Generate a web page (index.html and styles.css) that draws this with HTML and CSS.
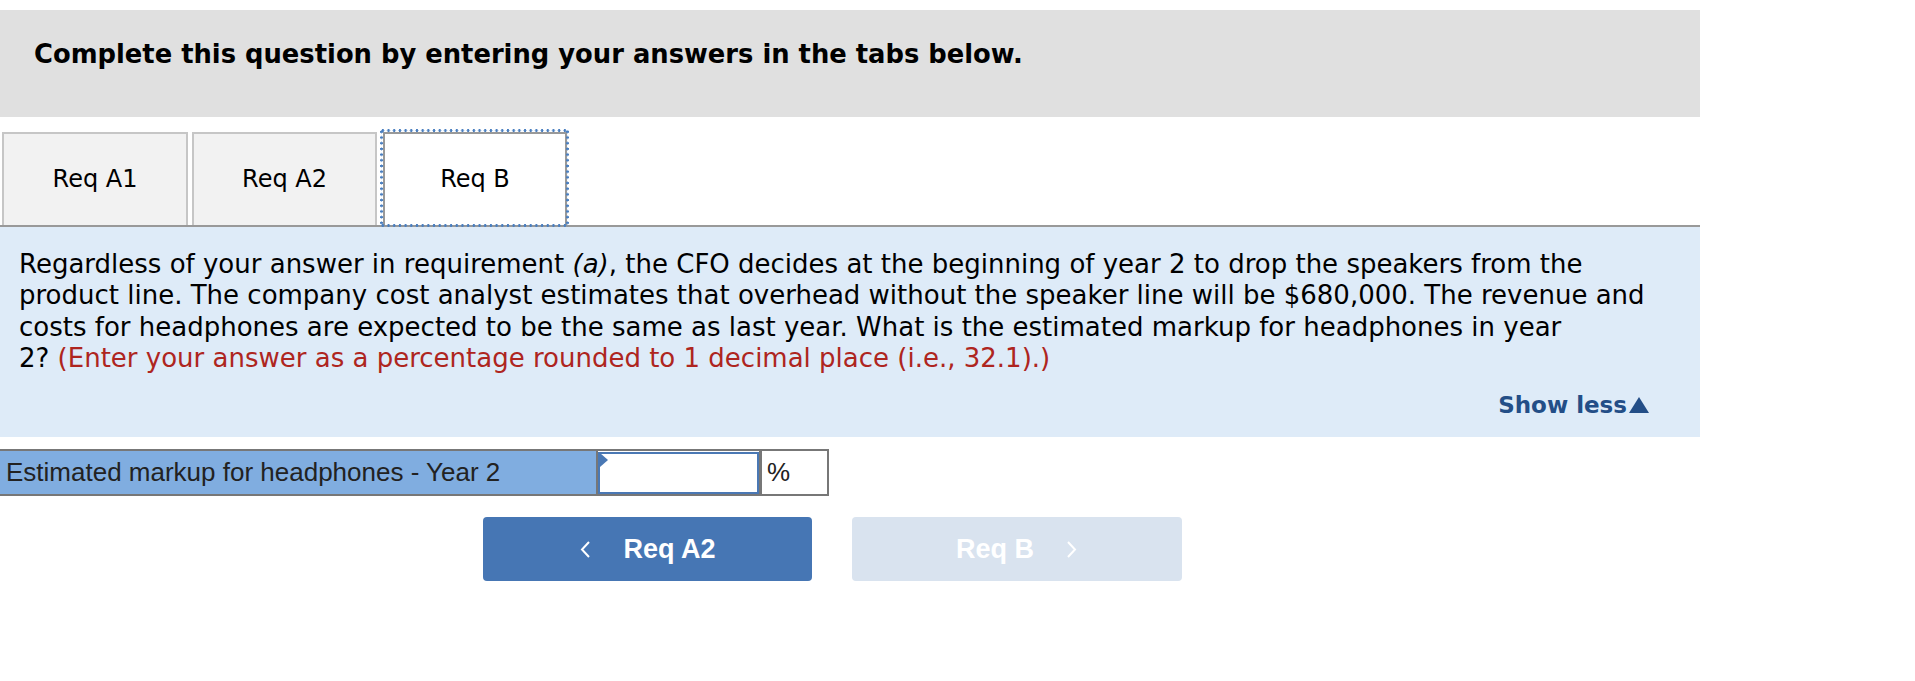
FILE: index.html
```html
<!DOCTYPE html>
<html lang="en">
<head>
	<meta charset="UTF-8">
	<title>Req B</title>
	<link rel="stylesheet" href="styles.css">
</head>
<body>
	<div class="page">
		<div class="intro">Complete this question by entering your answers in the tabs below.</div>
		<ul class="tabs">
			<li class="tab">Req A1</li>
			<li class="tab">Req A2</li>
			<li class="tab tab-on">Req B</li>
		</ul>
		<div class="panel">
			<p class="question">Regardless of your answer in requirement <i>(a)</i>, the CFO decides at the beginning of year 2 to drop the speakers from the product line. The company cost analyst estimates that overhead without the speaker line will be $680,000. The revenue and costs for headphones are expected to be the same as last year. What is the estimated markup for headphones in year 2?&nbsp;<span class="hint">(Enter your answer as a percentage rounded to 1 decimal place (i.e., 32.1).)</span></p>
			<div class="more"><a href="javascript:void(0)">Show less<span class="arrow"></span></a></div>
		</div>
		<div class="answer">
			<div class="answer-label">Estimated markup for headphones - Year 2</div>
			<div class="answer-input"><input type="text" value=""></div>
			<div class="answer-unit">%</div>
		</div>
		<div class="nav">
			<a class="btn" href="javascript:void(0)">
				<svg width="12" height="17" viewBox="0 0 12 17"><polyline points="10,1 3,8.5 10,16" fill="none" stroke="#fff" stroke-width="2"/></svg>
				<span>Req A2</span>
			</a>
			<a class="btn btn-off" href="javascript:void(0)">
				<span>Req B</span>
				<svg width="12" height="17" viewBox="0 0 12 17"><polyline points="2,1 9,8.5 2,16" fill="none" stroke="#fff" stroke-width="2"/></svg>
			</a>
		</div>
	</div>
</body>
</html>
```

FILE: styles.css
```css
body,div,p,ul,li,input{
	margin:0;
	padding:0;
}
ul{
	list-style-type: none;
}
a{
	text-decoration: none;
	outline: none;
}
body{
	font:26px/31.3px "DejaVu Sans", Verdana, sans-serif;
	color:#000;
	background:#fff;
}
.page{
	width:1700px;
	margin-top:10px;
}
.intro{
	background:#e0e0e0;
	font-weight:700;
	font-size:25.8px;
	line-height:30px;
	padding:29px 34px 48px;
}
.tabs{
	display:flex;
	gap:4px;
	margin-top:15px;
	padding-left:2px;
	border-bottom:2px solid #999;
	font-size:24px;
}
.tab{
	box-sizing:border-box;
	width:186px;
	height:93px;
	display:flex;
	align-items:center;
	justify-content:center;
	background:#f2f2f2;
	border:2px solid #c6c6c6;
	border-bottom:0;
}
.tab:nth-child(2){
	width:185px;
}
.tab-on{
	position:relative;
	width:184px;
	margin-left:2px;
	background:#fff;
	border-color:#999;
}
/* focus ring, dotted */
.tab-on:after{
	content:"";
	position:absolute;
	left:-5px;
	right:-4px;
	top:-5px;
	bottom:-2px;
	background:
		radial-gradient(circle, #4a7fc0 1.1px, transparent 1.7px) 0 0/5.7px 3px repeat-x,
		radial-gradient(circle, #4a7fc0 1.1px, transparent 1.7px) 0 100%/5.7px 3px repeat-x,
		radial-gradient(circle, #4a7fc0 1.1px, transparent 1.7px) 0 0/3px 5.7px repeat-y,
		radial-gradient(circle, #4a7fc0 1.1px, transparent 1.7px) 100% 0/3px 5.7px repeat-y;
}
.panel{
	background:#deebf8;
	padding:22px 40px 19px 19px;
}
.question .hint{
	color:#ae2520;
}
.more{
	margin-top:18px;
	text-align:right;
	padding-right:11px;
	font-weight:700;
	font-size:23px;
	line-height:26px;
}
.more a{
	color:#234e87;
}
.more .arrow{
	display:inline-block;
	margin-left:2px;
	border-left:10px solid transparent;
	border-right:10px solid transparent;
	border-bottom:16px solid #234e87;
}
.answer{
	display:flex;
	box-sizing:border-box;
	width:829px;
	height:47px;
	margin-top:12px;
	border:2px solid #777;
	border-left:0;
	font:26px "Liberation Sans", Arial, sans-serif;
	color:#222;
}
.answer-label{
	width:598px;
	background:#80ade0;
	border-right:2px solid #777;
	padding-left:6px;
	box-sizing:border-box;
	display:flex;
	align-items:center;
}
.answer-input{
	position:relative;
	width:161px;
	border-right:3px solid #777;
	padding-top:1px;
}
.answer-input:before{
	content:"";
	position:absolute;
	left:2px;
	top:2px;
	border-left:8px solid #4a78b4;
	border-top:7px solid transparent;
	border-bottom:7px solid transparent;
}
.answer-input input{
	box-sizing:border-box;
	width:161px;
	height:42px;
	border:2px solid #4a78b4;
	background:#fff;
	font:inherit;
	outline:none;
}
.answer-unit{
	flex:1;
	background:#fff;
	padding-left:5px;
	display:flex;
	align-items:center;
}
.nav{
	display:flex;
	gap:40px;
	margin-top:21px;
	padding-left:483px;
}
.btn{
	box-sizing:border-box;
	width:329px;
	height:64px;
	display:flex;
	align-items:center;
	justify-content:center;
	gap:32px;
	background:#4676b4;
	border-radius:4px;
	color:#fff;
	font:700 27px "Liberation Sans", Arial, sans-serif;
}
.btn-off{
	width:330px;
	background:#d9e3ef;
}
```
